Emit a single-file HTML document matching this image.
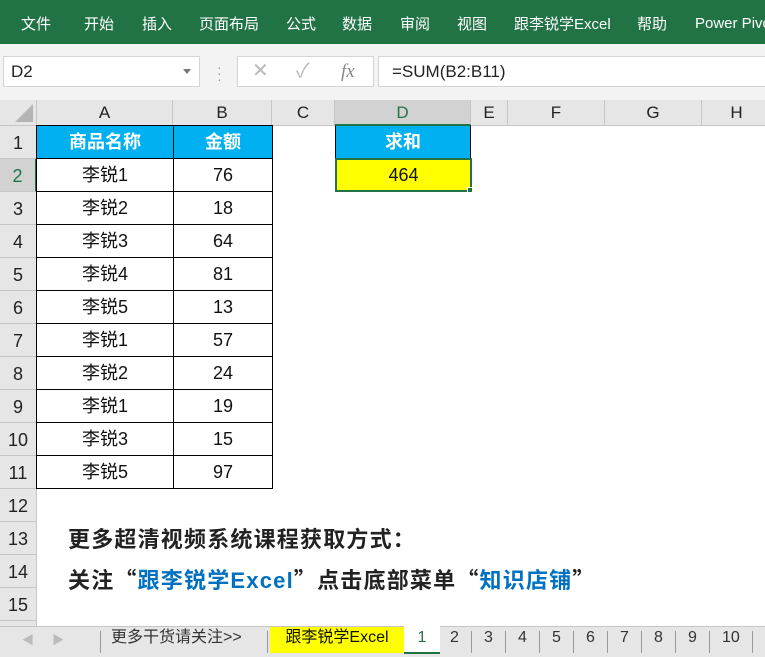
<!DOCTYPE html>
<html><head><meta charset="utf-8"><style>
*{margin:0;padding:0;box-sizing:border-box}
body{width:765px;height:657px;overflow:hidden;background:#fff;position:relative;font-family:"Liberation Sans","Noto Sans CJK SC",sans-serif}
.a{position:absolute}
.rib{left:0;top:0;width:765px;height:44px;background:#217346;color:#fff;font-size:15px}
.rib span{position:absolute;top:13px;white-space:nowrap}
.fb{left:0;top:44px;width:765px;height:56px;background:#f3f3f3}
.ch{top:100px;height:26px;background:#e6e6e6;border-right:1px solid #c6c6c6;border-bottom:1px solid #c6c6c6;text-align:center;font-size:17px;line-height:25px;color:#222}
.rh{left:0;width:37px;height:33px;background:#e6e6e6;border-bottom:1px solid #c6c6c6;border-right:1px solid #c6c6c6;text-align:center;font-size:18px;line-height:34px;color:#222}
.c{height:34px;border:1px solid #000;text-align:center;font-size:18px;line-height:32px;color:#111}
.h{background:#00b0f0;color:#fff;font-weight:bold}
.q{font-family:"Noto Sans CJK SC",sans-serif}
.t span{position:absolute;top:0px;line-height:22px;white-space:nowrap}
.s{position:absolute;top:4px;height:22px;border-left:1px solid #999}
</style></head><body>
<div class="a rib"><span style="left:21px">文件</span><span style="left:84px">开始</span><span style="left:142px">插入</span><span style="left:199px">页面布局</span><span style="left:286px">公式</span><span style="left:342px">数据</span><span style="left:400px">审阅</span><span style="left:457px">视图</span><span style="left:514px">跟李锐学Excel</span><span style="left:637px">帮助</span><span style="left:695px;top:15px">Power Pivot</span></div>
<div class="a fb">
<div class="a" style="left:3px;top:12px;width:197px;height:31px;background:#fff;border:1px solid #d4d4d4;font-size:17px;line-height:29px;padding-left:7px;color:#222">D2<span class="a" style="right:8px;top:12px;border-left:4px solid transparent;border-right:4px solid transparent;border-top:5px solid #777"></span></div>
<div class="a" style="left:217px;top:20px;color:#999;font-size:14px;line-height:6px">·<br>·<br>·</div>
<div class="a" style="left:237px;top:12px;width:137px;height:31px;background:#fff;border:1px solid #d4d4d4;color:#bbb;font-size:20px;line-height:29px"><span class="a" style="left:14px">✕</span><span class="a" style="left:58px">✓</span><span class="a" style="left:103px;color:#888;font-family:'Liberation Serif',serif;font-style:italic;font-size:19px">fx</span></div>
<div class="a" style="left:378px;top:12px;width:390px;height:31px;background:#fff;border:1px solid #d4d4d4;font-size:17px;line-height:29px;padding-left:13px;color:#222">=SUM(B2:B11)</div>
</div>
<div class="a ch" style="left:0;width:37px"><div class="a" style="right:3px;bottom:3px;border-left:18px solid transparent;border-bottom:18px solid #b4b4b4"></div></div>
<div class="a ch" style="left:37px;width:136px">A</div>
<div class="a ch" style="left:173px;width:99px">B</div>
<div class="a ch" style="left:272px;width:63px">C</div>
<div class="a ch" style="left:335px;width:136px;background:#d2d2d2;color:#217346;border-bottom:2px solid #217346">D</div>
<div class="a ch" style="left:471px;width:37px">E</div>
<div class="a ch" style="left:508px;width:97px">F</div>
<div class="a ch" style="left:605px;width:97px">G</div>
<div class="a ch" style="left:702px;width:70px">H</div>
<div class="a rh" style="top:126px">1</div>
<div class="a rh" style="top:159px;background:#d2d2d2;color:#217346;border-right:2px solid #217346">2</div>
<div class="a rh" style="top:192px">3</div>
<div class="a rh" style="top:225px">4</div>
<div class="a rh" style="top:258px">5</div>
<div class="a rh" style="top:291px">6</div>
<div class="a rh" style="top:324px">7</div>
<div class="a rh" style="top:357px">8</div>
<div class="a rh" style="top:390px">9</div>
<div class="a rh" style="top:423px">10</div>
<div class="a rh" style="top:456px">11</div>
<div class="a rh" style="top:489px">12</div>
<div class="a rh" style="top:522px">13</div>
<div class="a rh" style="top:555px">14</div>
<div class="a rh" style="top:588px">15</div>
<div class="a rh" style="top:621px">16</div>
<div class="a c h" style="left:36px;top:125px;width:138px">商品名称</div>
<div class="a c h" style="left:173px;top:125px;width:100px">金额</div>
<div class="a c h" style="left:335px;top:125px;width:136px;border-color:#217346 #000 #000 #000">求和</div>
<div class="a c" style="left:335px;top:158px;width:137px;background:#ff0;border:2px solid #217346;line-height:30px">464</div>
<div class="a" style="left:467px;top:187px;width:6px;height:6px;background:#217346;border:1px solid #fff"></div>
<div class="a c" style="left:36px;top:158px;width:138px">李锐1</div><div class="a c" style="left:173px;top:158px;width:100px">76</div>
<div class="a c" style="left:36px;top:191px;width:138px">李锐2</div><div class="a c" style="left:173px;top:191px;width:100px">18</div>
<div class="a c" style="left:36px;top:224px;width:138px">李锐3</div><div class="a c" style="left:173px;top:224px;width:100px">64</div>
<div class="a c" style="left:36px;top:257px;width:138px">李锐4</div><div class="a c" style="left:173px;top:257px;width:100px">81</div>
<div class="a c" style="left:36px;top:290px;width:138px">李锐5</div><div class="a c" style="left:173px;top:290px;width:100px">13</div>
<div class="a c" style="left:36px;top:323px;width:138px">李锐1</div><div class="a c" style="left:173px;top:323px;width:100px">57</div>
<div class="a c" style="left:36px;top:356px;width:138px">李锐2</div><div class="a c" style="left:173px;top:356px;width:100px">24</div>
<div class="a c" style="left:36px;top:389px;width:138px">李锐1</div><div class="a c" style="left:173px;top:389px;width:100px">19</div>
<div class="a c" style="left:36px;top:422px;width:138px">李锐3</div><div class="a c" style="left:173px;top:422px;width:100px">15</div>
<div class="a c" style="left:36px;top:455px;width:138px">李锐5</div><div class="a c" style="left:173px;top:455px;width:100px">97</div>
<div class="a" style="left:68px;top:525px;font-size:22px;line-height:30px;font-weight:bold;color:#222;white-space:nowrap;letter-spacing:1.2px">更多超清视频系统课程获取方式：</div>
<div class="a" style="left:68px;top:564px;font-size:22px;line-height:30px;font-weight:bold;color:#222;white-space:nowrap;letter-spacing:1.2px">关注<span class="q">“</span><span style="color:#0070c0">跟李锐学Excel</span><span class="q">”</span>点击底部菜单<span class="q">“</span><span style="color:#0070c0">知识店铺</span><span class="q">”</span></div>
<div class="a t" style="left:0;top:626px;width:765px;height:31px;background:#e6e6e6;border-top:1px solid #c6c6c6;font-size:16px;color:#333">
<span style="left:22px;top:2px;color:#bbb;font-size:12px">◀</span><span style="left:52px;top:2px;color:#bbb;font-size:12px">▶</span>
<div class="s" style="left:100px"></div>
<span style="left:111px">更多干货请关注&gt;&gt;</span>
<div class="s" style="left:267px"></div>
<div class="a" style="left:270px;top:0;width:134px;height:26px;background:#ff0;text-align:center;line-height:22px;color:#111;white-space:nowrap">跟李锐学Excel</div>
<div class="a" style="left:404px;top:-1px;width:36px;height:28px;background:#fff;border-bottom:2px solid #217346;text-align:center;line-height:24px;color:#217346">1</div>
<span style="left:450px">2</span><div class="s" style="left:471px"></div>
<span style="left:484px">3</span><div class="s" style="left:505px"></div>
<span style="left:518px">4</span><div class="s" style="left:539px"></div>
<span style="left:552px">5</span><div class="s" style="left:573px"></div>
<span style="left:586px">6</span><div class="s" style="left:607px"></div>
<span style="left:620px">7</span><div class="s" style="left:641px"></div>
<span style="left:654px">8</span><div class="s" style="left:675px"></div>
<span style="left:688px">9</span><div class="s" style="left:709px"></div>
<span style="left:722px">10</span><div class="s" style="left:752px"></div>
</div>
</body></html>
